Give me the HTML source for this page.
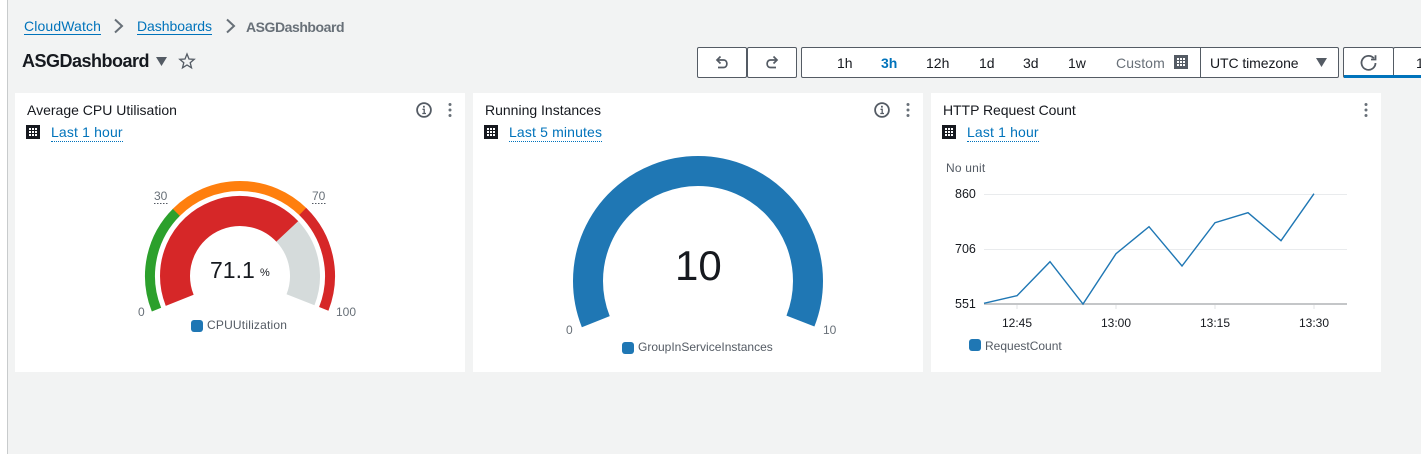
<!DOCTYPE html>
<html><head><meta charset="utf-8">
<style>
html,body{margin:0;padding:0;width:1421px;height:454px;overflow:hidden;background:#f2f3f3;}
body{position:relative;font-family:"Liberation Sans",sans-serif;color:#16191f;}
.t{position:absolute;white-space:nowrap;line-height:18px;font-family:"Liberation Sans",sans-serif;font-size:14px;}
.l{font-size:12px;}
.panel{position:absolute;top:93px;width:450px;height:279px;background:#fff;}
.box{position:absolute;box-sizing:border-box;border:1px solid #545b64;background:#fff;border-radius:2px;}
svg{position:absolute;overflow:visible;}
.sw{position:absolute;width:12px;height:12px;border-radius:3px;background:#1f77b4;}
</style></head><body>
<div style="position:absolute;left:0;top:0;width:7px;height:454px;background:#fff;"></div>
<div style="position:absolute;left:7px;top:0;width:1px;height:454px;background:#c8cbcc;"></div>

<div class="t" style="left:24px;top:18px;color:#0073bb;letter-spacing:.13px;border-bottom:1px solid #0073bb;line-height:16px;">CloudWatch</div>
<svg style="left:112px;top:18px" width="14" height="16"><path d="M3 1.500 L10 8 L3 14.500" fill="none" stroke="#687078" stroke-width="2"/></svg>
<div class="t" style="left:137px;top:18px;color:#0073bb;letter-spacing:-.05px;border-bottom:1px solid #0073bb;line-height:16px;">Dashboards</div>
<svg style="left:224px;top:18px" width="14" height="16"><path d="M3 1.500 L10 8 L3 14.500" fill="none" stroke="#687078" stroke-width="2"/></svg>
<div class="t" style="left:246px;top:18px;color:#687078;font-weight:bold;letter-spacing:-.45px;">ASGDashboard</div>

<div class="t" style="left:22px;top:51px;font-size:18px;font-weight:bold;line-height:20px;letter-spacing:-.5px;">ASGDashboard</div>
<svg style="left:156px;top:57px" width="12" height="10"><path d="M0 0 H11 L5.500 9 Z" fill="#545b64"/></svg>
<svg style="left:179px;top:53px" width="16" height="16"><path d="M8 1 L10 6 L15.200 6.300 L11.200 9.700 L12.500 14.800 L8 12 L3.500 14.800 L4.800 9.700 L.8 6.300 L6 6 Z" fill="none" stroke="#545b64" stroke-width="1.300"/></svg>

<div class="box" style="left:697px;top:47px;width:50px;height:31px;"></div>
<div class="box" style="left:747px;top:47px;width:50px;height:31px;"></div>
<svg style="left:714px;top:55px" width="16" height="16" fill="none" stroke="#545b64" stroke-width="1.700"><path d="M3.500 5 H9.500 C14 5 14 12.500 9.500 12.500 H4"/><path d="M6.500 1.500 L3 5 L6.500 8.500"/></svg>
<svg style="left:764px;top:55px" width="16" height="16" fill="none" stroke="#545b64" stroke-width="1.700"><path d="M12.500 5 H6.500 C2 5 2 12.500 6.500 12.500 H12"/><path d="M9.500 1.500 L13 5 L9.500 8.500"/></svg>

<div class="box" style="left:801px;top:47px;width:538px;height:31px;"></div>
<div style="position:absolute;left:1200px;top:47px;width:1px;height:31px;background:#545b64;"></div>
<div class="t" style="left:837px;top:54px;">1h</div>
<div class="t" style="left:881px;top:54px;color:#0073bb;font-weight:bold;">3h</div>
<div class="t" style="left:926px;top:54px;">12h</div>
<div class="t" style="left:979px;top:54px;">1d</div>
<div class="t" style="left:1023px;top:54px;">3d</div>
<div class="t" style="left:1068px;top:54px;">1w</div>
<div class="t" style="left:1116px;top:54px;color:#687078;letter-spacing:.1px;">Custom</div>
<svg style="left:1174px;top:55px" width="14" height="14"><rect width="14" height="14" fill="#545b64"/><g fill="#fff"><rect x="3" y="3" width="2" height="2"/><rect x="6" y="3" width="2" height="2"/><rect x="9" y="3" width="2" height="2"/><rect x="3" y="6" width="2" height="2"/><rect x="6" y="6" width="2" height="2"/><rect x="9" y="6" width="2" height="2"/><rect x="3" y="9" width="2" height="2"/><rect x="6" y="9" width="2" height="2"/><rect x="9" y="9" width="2" height="2"/></g></svg>
<div class="t" style="left:1210px;top:54px;letter-spacing:-.08px;">UTC timezone</div>
<svg style="left:1316px;top:58px" width="12" height="10"><path d="M0 0 H11 L5.500 9 Z" fill="#545b64"/></svg>

<div class="box" style="left:1343px;top:47px;width:51px;height:31px;"></div>
<div class="box" style="left:1393px;top:47px;width:40px;height:31px;"></div>
<div style="position:absolute;left:1344px;top:75px;width:77px;height:3px;background:#0073bb;"></div>
<svg style="left:1360px;top:54px" width="18" height="18" fill="none" stroke="#545b64" stroke-width="1.800"><path d="M13.800 4.300 A7 7 0 1 0 15.500 9"/><path d="M15.500 1.200 V5.500 H11"/></svg>
<div class="t" style="left:1416px;top:54px;">1</div>

<!-- Panel 1 -->
<div class="panel" style="left:15px;"></div>
<div class="t" style="left:27px;top:101px;">Average CPU Utilisation</div>
<svg style="left:416px;top:102px" width="16" height="16" fill="none"><circle cx="8" cy="8" r="6.900" stroke="#545b64" stroke-width="1.800"/><path d="M6.500 7.300 H8.200 V11.500 M6.300 11.500 H10" stroke="#545b64" stroke-width="1.300"/><rect x="7" y="3.800" width="1.800" height="1.800" fill="#545b64"/></svg>
<svg style="left:447px;top:102px" width="6" height="16" fill="#687078"><circle cx="3" cy="2.500" r="1.500"/><circle cx="3" cy="8" r="1.500"/><circle cx="3" cy="13.500" r="1.500"/></svg>
<svg style="left:26px;top:125px" width="14" height="14"><rect width="14" height="14" fill="#16191f"/><g fill="#fff"><rect x="3" y="3" width="2" height="2"/><rect x="6" y="3" width="2" height="2"/><rect x="9" y="3" width="2" height="2"/><rect x="3" y="6" width="2" height="2"/><rect x="6" y="6" width="2" height="2"/><rect x="9" y="6" width="2" height="2"/><rect x="3" y="9" width="2" height="2"/><rect x="6" y="9" width="2" height="2"/><rect x="9" y="9" width="2" height="2"/></g></svg>
<div class="t" style="left:51px;top:123px;color:#0073bb;letter-spacing:.15px;border-bottom:1px dotted #0073bb;">Last 1 hour</div>

<svg style="left:0;top:0" width="1421" height="454" fill="none">
<g transform="translate(240 276)">
<circle r="90" stroke="#2ca02c" stroke-width="10" pathLength="360" stroke-dasharray="66.900 293.100" transform="rotate(158.500)"/>
<circle r="90" stroke="#ff7f0e" stroke-width="10" pathLength="360" stroke-dasharray="89.200 270.800" transform="rotate(225.400)"/>
<circle r="90" stroke="#d62728" stroke-width="10" pathLength="360" stroke-dasharray="66.900 293.100" transform="rotate(314.600)"/>
<circle r="65" stroke="#d62728" stroke-width="30" pathLength="360" stroke-dasharray="158.600 201.400" transform="rotate(158.500)"/>
<circle r="65" stroke="#d5dbdb" stroke-width="30" pathLength="360" stroke-dasharray="64.400 295.600" transform="rotate(317.100)"/>
</g>
<path d="M154 203.500 H168 M312 203.500 H326" stroke="#545b64" stroke-width="1" stroke-dasharray="1.500 1.500"/>
</svg>

<div class="t l" style="left:154px;top:187px;color:#687078;">30</div>
<div class="t l" style="left:312px;top:187px;color:#687078;">70</div>
<div class="t l" style="left:138px;top:303px;color:#687078;">0</div>
<div class="t l" style="left:336px;top:303px;color:#687078;">100</div>
<div class="t" style="left:210px;top:257px;font-size:23px;line-height:26px;">71.1</div>
<div class="t" style="left:260px;top:264px;font-size:11px;">%</div>
<div class="sw" style="left:191px;top:320px;"></div>
<div class="t l" style="left:207px;top:316px;color:#545b64;letter-spacing:.2px;">CPUUtilization</div>

<!-- Panel 2 -->
<div class="panel" style="left:473px;"></div>
<svg style="left:0;top:0" width="1421" height="454" fill="none">
<g transform="translate(698 281)">
<circle r="110" stroke="#1f77b4" stroke-width="30" pathLength="360" stroke-dasharray="223 137" transform="rotate(158.500)"/>
</g>
</svg>
<div class="t" style="left:485px;top:101px;">Running Instances</div>
<svg style="left:874px;top:102px" width="16" height="16" fill="none"><circle cx="8" cy="8" r="6.900" stroke="#545b64" stroke-width="1.800"/><path d="M6.500 7.300 H8.200 V11.500 M6.300 11.500 H10" stroke="#545b64" stroke-width="1.300"/><rect x="7" y="3.800" width="1.800" height="1.800" fill="#545b64"/></svg>
<svg style="left:905px;top:102px" width="6" height="16" fill="#687078"><circle cx="3" cy="2.500" r="1.500"/><circle cx="3" cy="8" r="1.500"/><circle cx="3" cy="13.500" r="1.500"/></svg>
<svg style="left:484px;top:125px" width="14" height="14"><rect width="14" height="14" fill="#16191f"/><g fill="#fff"><rect x="3" y="3" width="2" height="2"/><rect x="6" y="3" width="2" height="2"/><rect x="9" y="3" width="2" height="2"/><rect x="3" y="6" width="2" height="2"/><rect x="6" y="6" width="2" height="2"/><rect x="9" y="6" width="2" height="2"/><rect x="3" y="9" width="2" height="2"/><rect x="6" y="9" width="2" height="2"/><rect x="9" y="9" width="2" height="2"/></g></svg>
<div class="t" style="left:509px;top:123px;color:#0073bb;letter-spacing:.15px;border-bottom:1px dotted #0073bb;">Last 5 minutes</div>
<div class="t" style="left:675px;top:240px;font-size:42px;line-height:52px;">10</div>
<div class="t l" style="left:566px;top:321px;color:#687078;">0</div>
<div class="t l" style="left:823px;top:321px;color:#687078;">10</div>
<div class="sw" style="left:622px;top:342px;"></div>
<div class="t l" style="left:638px;top:338px;color:#545b64;">GroupInServiceInstances</div>

<!-- Panel 3 -->
<div class="panel" style="left:931px;"></div>
<div class="t" style="left:943px;top:101px;letter-spacing:-.05px;">HTTP Request Count</div>
<svg style="left:1363px;top:102px" width="6" height="16" fill="#687078"><circle cx="3" cy="2.500" r="1.500"/><circle cx="3" cy="8" r="1.500"/><circle cx="3" cy="13.500" r="1.500"/></svg>
<svg style="left:942px;top:125px" width="14" height="14"><rect width="14" height="14" fill="#16191f"/><g fill="#fff"><rect x="3" y="3" width="2" height="2"/><rect x="6" y="3" width="2" height="2"/><rect x="9" y="3" width="2" height="2"/><rect x="3" y="6" width="2" height="2"/><rect x="6" y="6" width="2" height="2"/><rect x="9" y="6" width="2" height="2"/><rect x="3" y="9" width="2" height="2"/><rect x="6" y="9" width="2" height="2"/><rect x="9" y="9" width="2" height="2"/></g></svg>
<div class="t" style="left:967px;top:123px;color:#0073bb;letter-spacing:.15px;border-bottom:1px dotted #0073bb;">Last 1 hour</div>
<div class="t l" style="left:946px;top:159px;color:#545b64;letter-spacing:.2px;">No unit</div>
<div class="t" style="left:955px;top:185px;font-size:12.500px;">860</div>
<div class="t" style="left:955px;top:240px;font-size:12.500px;">706</div>
<div class="t" style="left:955px;top:295px;font-size:12.500px;">551</div>
<svg style="left:0;top:0" width="1421" height="454" fill="none">
<path d="M984 194.500 H1347 M984 249.500 H1347" stroke="#e9ebed" stroke-width="1"/>
<path d="M984 304 H1347" stroke="#c4c6c8" stroke-width="2"/>
<path d="M1017 305 V309 M1116 305 V309 M1215 305 V309 M1314 305 V309" stroke="#e1e3e5"/>
<path d="M984 303.300 L1017 295.700 L1050 261.700 L1083 304 L1116 253.700 L1149 226.700 L1182 266 L1215 222.700 L1248 212.700 L1281 240.700 L1314 193.700" stroke="#1f77b4" stroke-width="1.400"/>
</svg>
<div class="t l" style="left:1002px;top:314px;">12:45</div>
<div class="t l" style="left:1101px;top:314px;">13:00</div>
<div class="t l" style="left:1200px;top:314px;">13:15</div>
<div class="t l" style="left:1299px;top:314px;">13:30</div>
<div class="sw" style="left:969px;top:339px;"></div>
<div class="t l" style="left:985px;top:337px;color:#545b64;">RequestCount</div>
</body></html>
